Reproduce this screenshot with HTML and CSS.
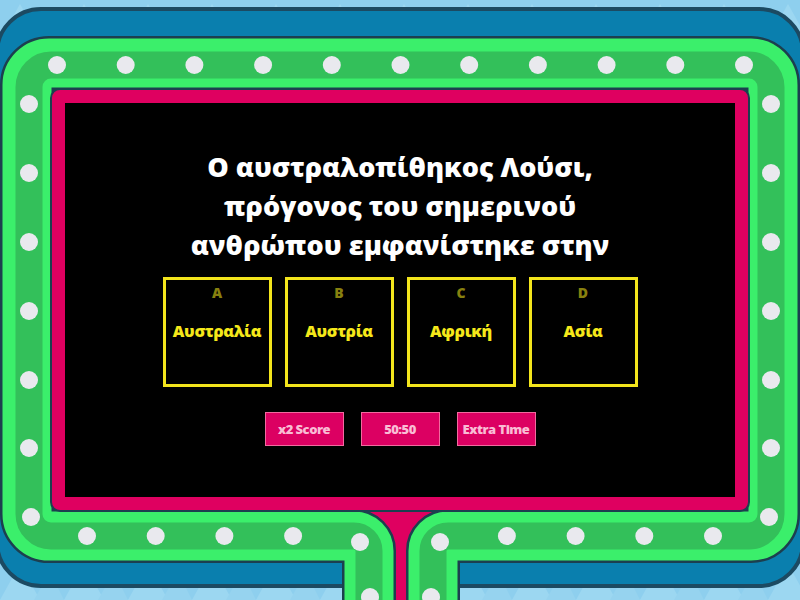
FILE: index.html
```html
<!DOCTYPE html>
<html lang="el">
<head>
<meta charset="utf-8">
<title>Quiz</title>
<link rel="stylesheet" href="styles.css">
</head>
<body>
<div class="stage">
  <svg class="frame" width="800" height="600" viewBox="0 0 800 600" aria-hidden="true">
    <defs>
      <pattern id="tri" width="64" height="40" patternUnits="userSpaceOnUse">
        <polygon points="0,40 20,4 40,40" fill="#a6dcf3"/>
        <polygon points="34,40 50,12 64,40" fill="#9bd6f0"/>
      </pattern>
    </defs>
    <rect x="0" y="0" width="800" height="600" fill="#8ecfee"/>
    <rect x="0" y="0" width="800" height="600" fill="url(#tri)" opacity="0.6"/>
    <rect x="-3" y="9" width="806" height="577" rx="44" fill="#0a7fae" stroke="#1c4a62" stroke-width="4"/>
    <rect x="345" y="495" width="110" height="110" fill="#df0060"/>
    <path d="M 369 640 L 369 551 A 15 15 0 0 0 354 536 L 49 536 A 22 22 0 0 1 27 514 L 27 85 A 22 22 0 0 1 49 63 L 751 63 A 22 22 0 0 1 773 85 L 773 514 A 22 22 0 0 1 751 536 L 448 536 A 15 15 0 0 0 433 551 L 433 640" fill="none" stroke="#1c3f4f" stroke-width="54"/>
    <path d="M 369 640 L 369 551 A 15 15 0 0 0 354 536 L 49 536 A 22 22 0 0 1 27 514 L 27 85 A 22 22 0 0 1 49 63 L 751 63 A 22 22 0 0 1 773 85 L 773 514 A 22 22 0 0 1 751 536 L 448 536 A 15 15 0 0 0 433 551 L 433 640" fill="none" stroke="#3bef6b" stroke-width="49"/>
    <path d="M 369 640 L 369 551 A 15 15 0 0 0 354 536 L 51 536 A 22 22 0 0 1 29 514 L 29 87 A 22 22 0 0 1 51 65 L 749 65 A 22 22 0 0 1 771 87 L 771 514 A 22 22 0 0 1 749 536 L 448 536 A 15 15 0 0 0 433 551 L 433 640" fill="none" stroke="#33c05a" stroke-width="27"/>
    <g fill="#e9e9ee">
      <circle cx="57" cy="65" r="9"/><circle cx="125.7" cy="65" r="9"/><circle cx="194.4" cy="65" r="9"/><circle cx="263.1" cy="65" r="9"/><circle cx="331.8" cy="65" r="9"/><circle cx="400.5" cy="65" r="9"/><circle cx="469.2" cy="65" r="9"/><circle cx="537.9" cy="65" r="9"/><circle cx="606.6" cy="65" r="9"/><circle cx="675.3" cy="65" r="9"/><circle cx="744" cy="65" r="9"/>
      <circle cx="29" cy="104" r="9"/><circle cx="29" cy="173" r="9"/><circle cx="29" cy="242" r="9"/><circle cx="29" cy="311" r="9"/><circle cx="29" cy="380" r="9"/><circle cx="29" cy="448" r="9"/><circle cx="31" cy="517" r="9"/>
      <circle cx="771" cy="104" r="9"/><circle cx="771" cy="173" r="9"/><circle cx="771" cy="242" r="9"/><circle cx="771" cy="311" r="9"/><circle cx="771" cy="380" r="9"/><circle cx="771" cy="448" r="9"/><circle cx="769" cy="517" r="9"/>
      <circle cx="87" cy="536" r="9"/><circle cx="155.7" cy="536" r="9"/><circle cx="224.4" cy="536" r="9"/><circle cx="293.1" cy="536" r="9"/><circle cx="360" cy="542" r="9"/><circle cx="370" cy="597" r="9"/>
      <circle cx="713" cy="536" r="9"/><circle cx="644.3" cy="536" r="9"/><circle cx="575.6" cy="536" r="9"/><circle cx="506.9" cy="536" r="9"/><circle cx="440" cy="542" r="9"/><circle cx="431" cy="597" r="9"/>
    </g>
  </svg>
  <main class="screen">
    <h1 class="question">Ο αυστραλοπίθηκος Λούσι,<br>πρόγονος του σημερινού<br>ανθρώπου εμφανίστηκε στην</h1>
    <div class="answers">
      <div class="answer"><span class="key">A</span><span class="label">Αυστραλία</span></div>
      <div class="answer"><span class="key">B</span><span class="label">Αυστρία</span></div>
      <div class="answer"><span class="key">C</span><span class="label">Αφρική</span></div>
      <div class="answer"><span class="key">D</span><span class="label">Ασία</span></div>
    </div>
    <div class="powerups">
      <button class="powerup" type="button">x2 Score</button>
      <button class="powerup" type="button">50:50</button>
      <button class="powerup" type="button">Extra Time</button>
    </div>
  </main>
</div>
</body>
</html>
```

FILE: styles.css
```css
html, body {
  margin: 0;
  padding: 0;
  background: #8ecfee;
}

.stage {
  display: grid;
  width: 800px;
  height: 600px;
  overflow: hidden;
}

.frame,
.screen {
  grid-area: 1 / 1;
}

.frame {
  display: block;
}

.screen {
  margin: 90px 52px;
  width: 696px;
  height: 420px;
  box-sizing: border-box;
  border: 13px solid #df0060;
  border-radius: 8px;
  box-shadow: 0 0 0 2px #1c3f4f;
  background: #000;
  display: flex;
  flex-direction: column;
  align-items: center;
  padding-top: 44px;
  font-family: "Open Sans", "Noto Sans", "DejaVu Sans", sans-serif;
}

.question {
  margin: 0;
  color: #fff;
  font-size: 27px;
  font-weight: 800;
  line-height: 39px;
  text-align: center;
}

.answers {
  display: flex;
  gap: 13px;
  margin-top: 13px;
}

.answer {
  width: 109px;
  height: 110px;
  box-sizing: border-box;
  border: 3px solid #f3e51c;
  display: flex;
  flex-direction: column;
  align-items: center;
}

.key {
  margin-top: 5px;
  font-size: 14px;
  line-height: 16px;
  font-weight: 800;
  color: #87800f;
}

.label {
  margin-top: 20px;
  font-size: 16px;
  line-height: 20px;
  font-weight: 800;
  color: #f5e81a;
  letter-spacing: -0.3px;
}

.powerups {
  display: flex;
  gap: 17px;
  margin-top: 25px;
}

.powerup {
  width: 79px;
  height: 34px;
  box-sizing: border-box;
  padding: 0;
  border: 1.5px solid #f26a9f;
  background: #dc0062;
  color: #f9bcd4;
  font-family: "Open Sans", "Noto Sans", "DejaVu Sans", sans-serif;
  font-size: 13px;
  font-weight: 800;
  letter-spacing: -0.5px;
}
```
